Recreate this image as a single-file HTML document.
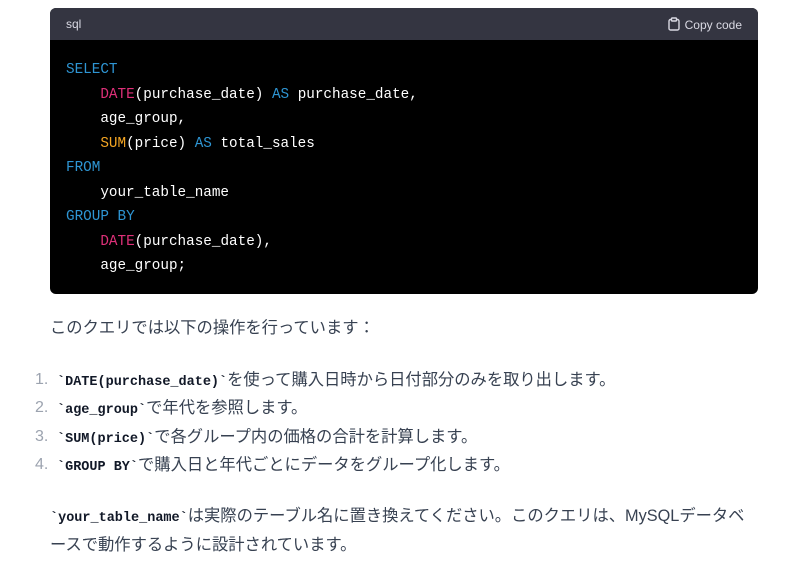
<!DOCTYPE html>
<html><head><meta charset="utf-8"><style>
*{margin:0;padding:0;box-sizing:border-box}
body{width:800px;height:566px;background:#fff;position:relative;overflow:hidden;font-family:"Liberation Sans","Noto Sans CJK JP",sans-serif;color:#374151}
.box{position:absolute;left:50px;top:8px;width:708px;height:286px;background:#000;border-radius:6px;overflow:hidden}
.hd{height:32px;background:#343541;color:#d9d9e3;font-size:12px;position:relative}
.hd .l{position:absolute;left:16px;top:9px}
.hd .r{position:absolute;right:16px;top:9px}
.code{position:absolute;left:16px;top:50px;font-family:"Liberation Mono",monospace;font-size:14.3px;color:#fff;white-space:pre;line-height:24.5px}
.k{color:#2e95d3}.f{color:#df3079}.s{color:#f5a623}
.t{position:absolute;font-size:16.3px;line-height:20px;white-space:nowrap;left:50px}
code{font-family:"Liberation Mono",monospace;font-weight:bold;font-size:13.5px;color:#111827}
.n{position:absolute;left:35px;color:#9ca3af;font-size:16px;line-height:20px}
</style></head><body>
<div class="box">
<div class="hd"><span class="l">sql</span><span class="r"><svg width="12" height="14" viewBox="0 0 12 14" style="vertical-align:-2px;margin-right:5px" fill="none" stroke="#d9d9e3" stroke-width="1.4"><rect x="1" y="2.5" width="10" height="10.5" rx="1.5"/><rect x="3.5" y="1" width="5" height="3" rx="0.8" fill="#343541"/></svg>Copy code</span></div>
<div class="code"><span class="k">SELECT</span>
    <span class="f">DATE</span>(purchase_date) <span class="k">AS</span> purchase_date,
    age_group,
    <span class="s">SUM</span>(price) <span class="k">AS</span> total_sales
<span class="k">FROM</span>
    your_table_name
<span class="k">GROUP</span> <span class="k">BY</span>
    <span class="f">DATE</span>(purchase_date),
    age_group;</div>
</div>
<div class="t" style="top:318px">このクエリでは以下の操作を行っています：</div>
<div class="n" style="top:370px">1.</div><div class="t" style="top:370px;left:57px"><code>`DATE(purchase_date)`</code>を使って購入日時から日付部分のみを取り出します。</div>
<div class="n" style="top:398px">2.</div><div class="t" style="top:398px;left:57px"><code>`age_group`</code>で年代を参照します。</div>
<div class="n" style="top:427px">3.</div><div class="t" style="top:427px;left:57px"><code>`SUM(price)`</code>で各グループ内の価格の合計を計算します。</div>
<div class="n" style="top:455px">4.</div><div class="t" style="top:455px;left:57px"><code>`GROUP BY`</code>で購入日と年代ごとにデータをグループ化します。</div>
<div class="t" style="top:506px"><code>`your_table_name`</code>は実際のテーブル名に置き換えてください。このクエリは、MySQLデータベ</div>
<div class="t" style="top:535px">ースで動作するように設計されています。</div>
</body></html>
